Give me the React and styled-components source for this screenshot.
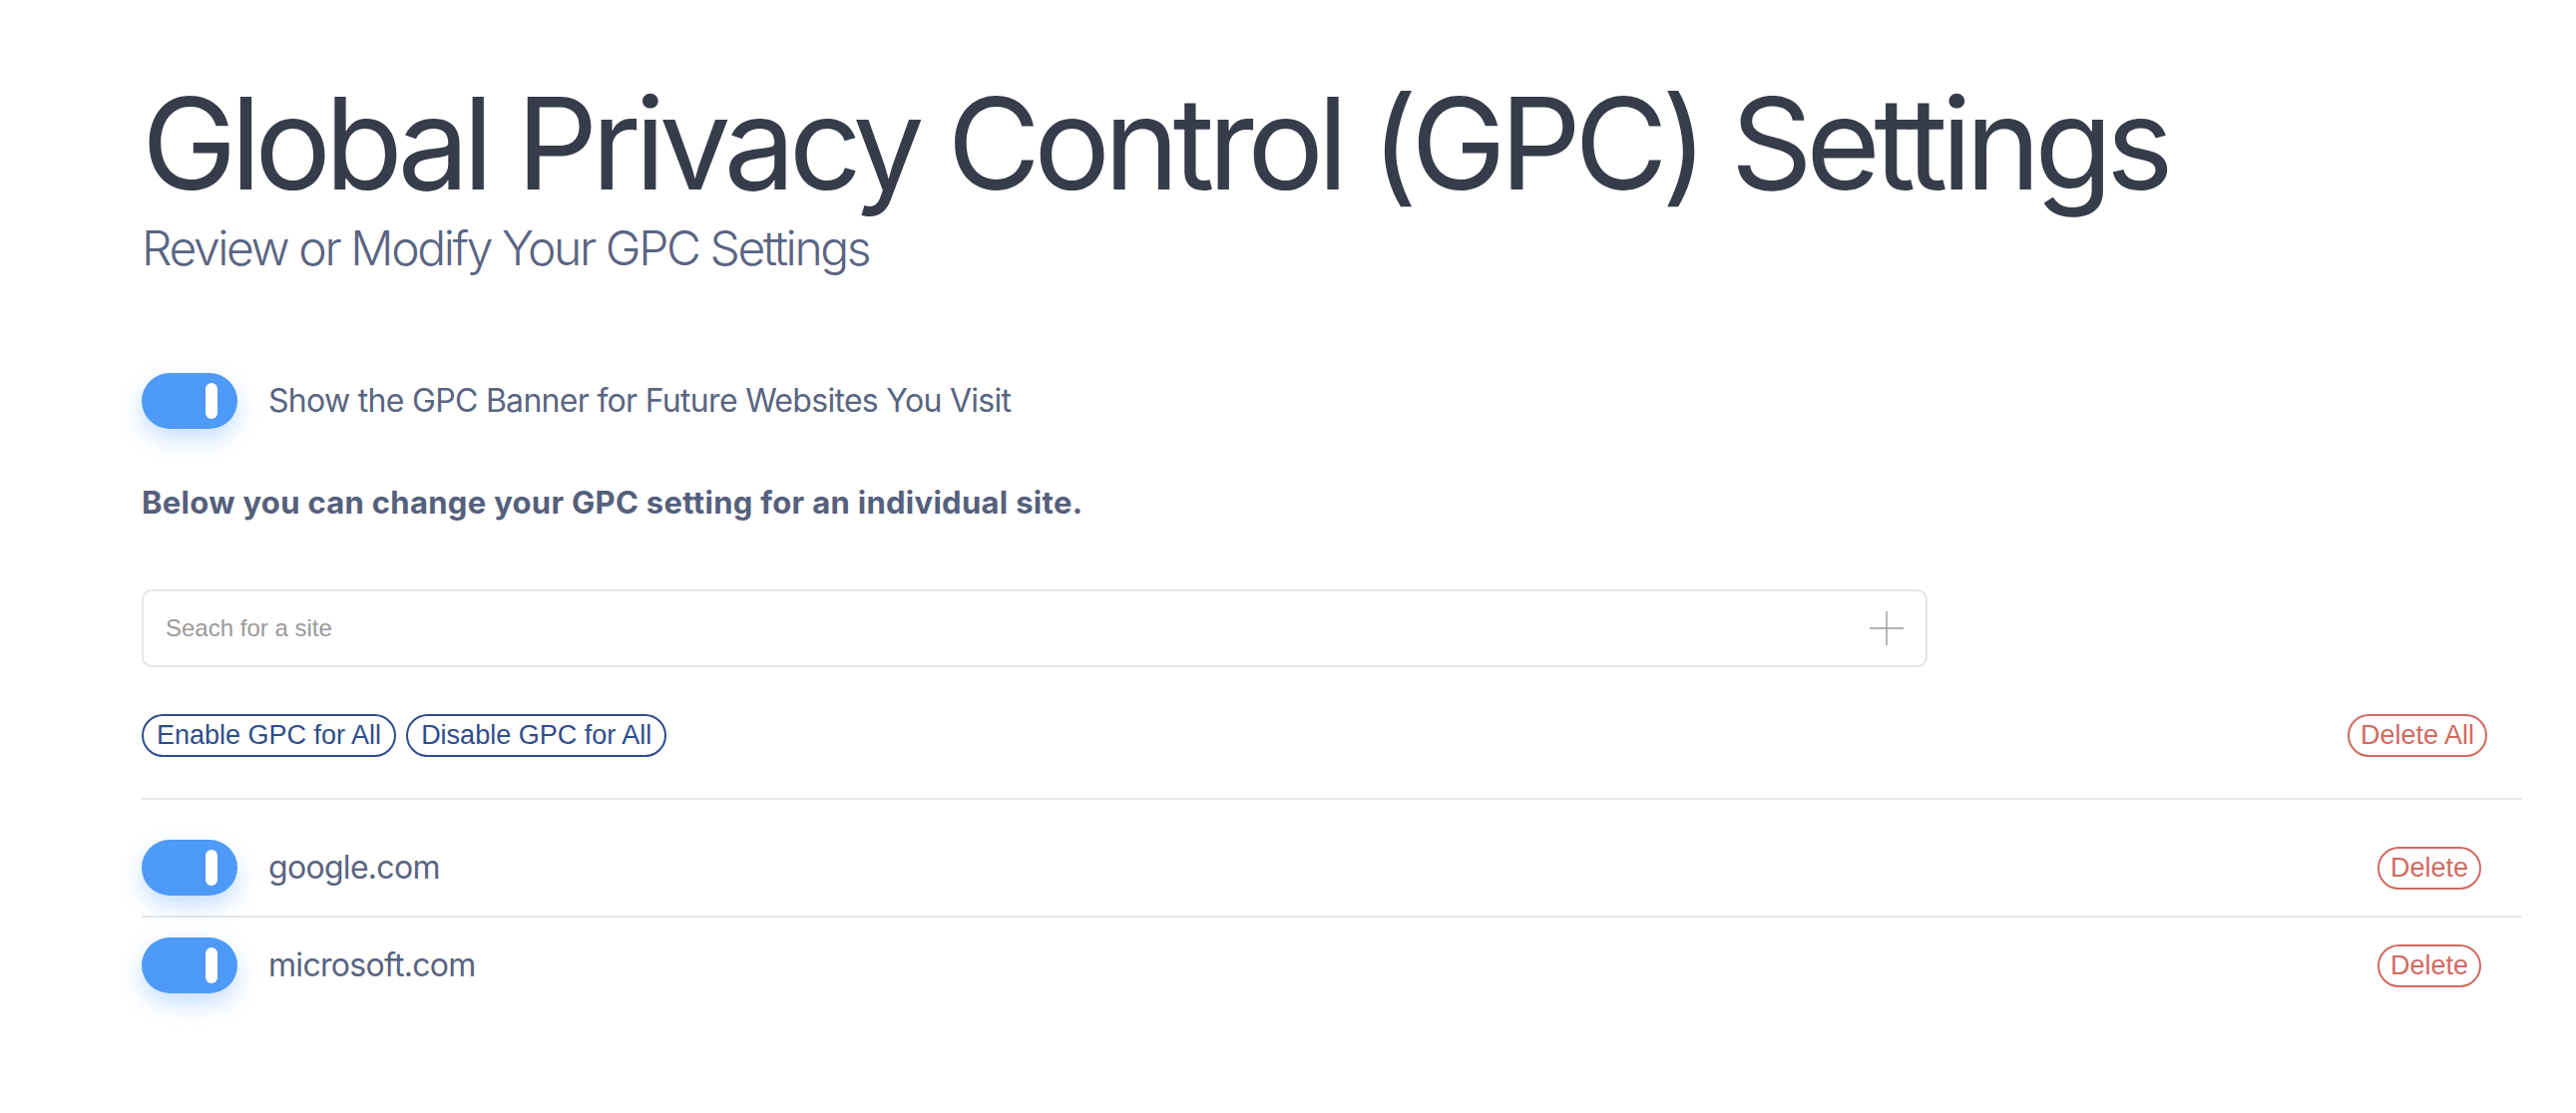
import React from 'react';
import styled, { createGlobalStyle } from 'styled-components';

const GlobalStyle = createGlobalStyle`
  html, body {
    margin: 0;
    padding: 0;
    background: #ffffff;
  }
  body {
    font-family: Inter, "Noto Sans", sans-serif;
  }
`;

const Page = styled.main`
  padding: 80px 54px 80px 142px;
  display: flex;
  flex-direction: column;
`;

const Title = styled.h1`
  margin: 0;
  font-size: 128px;
  line-height: 1;
  font-weight: 400;
  color: #363c4a;
  letter-spacing: -6.6px;
`;

const Subtitle = styled.h2`
  margin: 17px 0 0;
  font-size: 48px;
  line-height: 1;
  font-weight: 300;
  color: #5a6482;
  letter-spacing: -2.4px;
`;

const ToggleRow = styled.div`
  display: flex;
  align-items: center;
  gap: 31px;
`;

const BannerRow = styled(ToggleRow)`
  margin-top: 101px;
`;

const Switch = styled.div`
  position: relative;
  flex: none;
  width: 96px;
  height: 56px;
  border-radius: 28px;
  background: ${p => (p.$on ? '#4d9af8' : '#cfd6e2')};
  box-shadow: 0 10px 22px rgba(77, 154, 248, 0.32);
  cursor: pointer;

  &::after {
    content: '';
    position: absolute;
    top: 10px;
    left: ${p => (p.$on ? '64px' : '20px')};
    width: 12px;
    height: 36px;
    border-radius: 6px;
    background: #ffffff;
  }
`;

const Label = styled.span`
  font-size: 32px;
  color: #5a6482;
  line-height: 1;
  letter-spacing: -0.7px;
`;

const Note = styled.p`
  margin: 58px 0 0;
  font-size: 31px;
  line-height: 1;
  font-weight: 700;
  color: #55607c;
  letter-spacing: 0.3px;
`;

const SearchBox = styled.div`
  margin-top: 72px;
  width: 75%;
  height: 78px;
  box-sizing: border-box;
  border: 2px solid #e5e5e5;
  border-radius: 10px;
  display: flex;
  align-items: center;
  padding: 0 21px 0 20px;
`;

const SearchInput = styled.input`
  flex: 1;
  border: none;
  outline: none;
  background: transparent;
  font-family: "Liberation Sans", Arial, sans-serif;
  font-size: 24px;
  color: #333;

  &::placeholder {
    color: #9a9a9a;
  }
`;

const PlusIcon = styled.svg`
  flex: none;
  width: 36px;
  height: 36px;
`;

const Actions = styled.div`
  margin-top: 47px;
  display: flex;
  align-items: center;
  gap: 10px;
  padding-right: 35px;
`;

const Spacer = styled.div`
  flex: 1;
`;

const PillButton = styled.button`
  font-family: "Liberation Sans", Arial, sans-serif;
  font-size: 27px;
  line-height: 1;
  height: 43px;
  padding: 0 ${p => (p.$danger ? '11px' : '13px')};
  border-radius: 22px;
  background: #ffffff;
  border: 2px solid ${p => (p.$danger ? '#d16a60' : '#2e4d8c')};
  color: ${p => (p.$danger ? '#d16a60' : '#2e4d8c')};
  cursor: pointer;
`;

const Divider = styled.hr`
  margin: ${p => (p.$first ? '41px 0 20px' : '0')};
  border: none;
  height: 2px;
  background: #e6e6e6;
`;

const SiteRow = styled(ToggleRow)`
  padding: 20px 41px 20px 0;
`;

const SiteName = styled(Label)`
  flex: 1;
`;

const sites = [
  { domain: 'google.com', enabled: true },
  { domain: 'microsoft.com', enabled: true },
];

export default function App() {
  return (
    <>
      <GlobalStyle />
      <Page>
        <Title>Global Privacy Control (GPC) Settings</Title>
        <Subtitle>Review or Modify Your GPC Settings</Subtitle>

        <BannerRow>
          <Switch $on />
          <Label>Show the GPC Banner for Future Websites You Visit</Label>
        </BannerRow>

        <Note>Below you can change your GPC setting for an individual site.</Note>

        <SearchBox>
          <SearchInput placeholder="Seach for a site" />
          <PlusIcon viewBox="0 0 36 36">
            <path d="M18 1v34M1 18h34" stroke="#999" strokeWidth="1.4" fill="none" />
          </PlusIcon>
        </SearchBox>

        <Actions>
          <PillButton>Enable GPC for All</PillButton>
          <PillButton>Disable GPC for All</PillButton>
          <Spacer />
          <PillButton $danger>Delete All</PillButton>
        </Actions>

        <Divider $first />
        {sites.map((site, i) => (
          <React.Fragment key={site.domain}>
            {i > 0 && <Divider />}
            <SiteRow>
              <Switch $on={site.enabled} />
              <SiteName>{site.domain}</SiteName>
              <PillButton $danger>Delete</PillButton>
            </SiteRow>
          </React.Fragment>
        ))}
      </Page>
    </>
  );
}
